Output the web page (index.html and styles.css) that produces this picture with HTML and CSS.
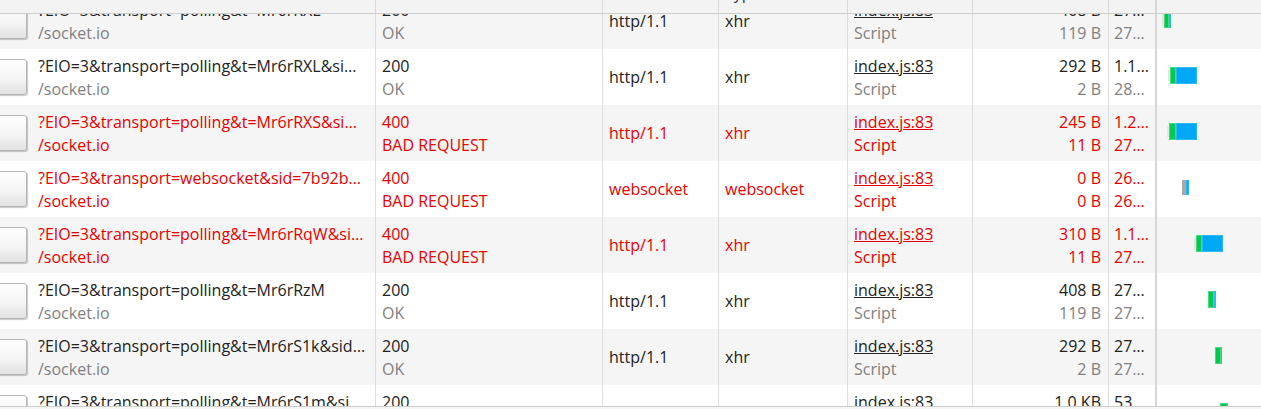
FILE: index.html
```html
<!DOCTYPE html>
<html>
<head>
<meta charset="utf-8">
<link rel="stylesheet" href="styles.css">
</head>
<body>
<div class="panel">
  <div class="grid header">
    <div class="hc"><span>Name</span></div>
    <div class="hc"><span>Status</span></div>
    <div class="hc"><span>Protocol</span></div>
    <div class="hc"><span>Type</span></div>
    <div class="hc"><span>Initiator</span></div>
    <div class="hc right"><span>Size</span></div>
    <div class="hc time"><span>Time</span></div>
    <div class="hc wfh"><span>Waterfall</span></div>
  </div>
  <div class="body">
    <div class="grid row odd first">
      <div class="c name"><div class="icon"></div><div class="two"><div class="l1">?EIO=3&amp;transport=polling&amp;t=Mr6rRXE</div><div class="l2">/socket.io</div></div></div>
      <div class="c"><div class="two"><div class="l1">200</div><div class="l2">OK</div></div></div>
      <div class="c"><div class="one">http/1.1</div></div>
      <div class="c"><div class="one">xhr</div></div>
      <div class="c"><div class="two"><div class="l1 link">index.js:83</div><div class="l2">Script</div></div></div>
      <div class="c right"><div class="two"><div class="l1">408 B</div><div class="l2">119 B</div></div></div>
      <div class="c time"><div class="two"><div class="l1">27…</div><div class="l2">27…</div></div></div>
      <div class="wf"><span class="seg stub" style="left:5px;width:2px"></span><span class="seg green" style="left:7px;width:5px"></span><span class="seg blue" style="left:12px;width:2px"></span></div>
    </div>
    <div class="grid row">
      <div class="c name"><div class="icon"></div><div class="two"><div class="l1">?EIO=3&amp;transport=polling&amp;t=Mr6rRXL&amp;si…</div><div class="l2">/socket.io</div></div></div>
      <div class="c"><div class="two"><div class="l1">200</div><div class="l2">OK</div></div></div>
      <div class="c"><div class="one">http/1.1</div></div>
      <div class="c"><div class="one">xhr</div></div>
      <div class="c"><div class="two"><div class="l1 link">index.js:83</div><div class="l2">Script</div></div></div>
      <div class="c right"><div class="two"><div class="l1">292 B</div><div class="l2">2 B</div></div></div>
      <div class="c time"><div class="two"><div class="l1">1.1…</div><div class="l2">28…</div></div></div>
      <div class="wf"><span class="seg stub" style="left:11px;width:2px"></span><span class="seg green" style="left:13px;width:6px"></span><span class="seg blue" style="left:19px;width:21px"></span></div>
    </div>
    <div class="grid row odd err">
      <div class="c name"><div class="icon"></div><div class="two"><div class="l1">?EIO=3&amp;transport=polling&amp;t=Mr6rRXS&amp;si…</div><div class="l2">/socket.io</div></div></div>
      <div class="c"><div class="two"><div class="l1">400</div><div class="l2">BAD REQUEST</div></div></div>
      <div class="c"><div class="one">http/1.1</div></div>
      <div class="c"><div class="one">xhr</div></div>
      <div class="c"><div class="two"><div class="l1 link">index.js:83</div><div class="l2">Script</div></div></div>
      <div class="c right"><div class="two"><div class="l1">245 B</div><div class="l2">11 B</div></div></div>
      <div class="c time"><div class="two"><div class="l1">1.2…</div><div class="l2">27…</div></div></div>
      <div class="wf"><span class="seg stub" style="left:10px;width:2px"></span><span class="seg green" style="left:12px;width:7px"></span><span class="seg blue" style="left:19px;width:21px"></span></div>
    </div>
    <div class="grid row err">
      <div class="c name"><div class="icon"></div><div class="two"><div class="l1">?EIO=3&amp;transport=websocket&amp;sid=7b92b…</div><div class="l2">/socket.io</div></div></div>
      <div class="c"><div class="two"><div class="l1">400</div><div class="l2">BAD REQUEST</div></div></div>
      <div class="c"><div class="one">websocket</div></div>
      <div class="c"><div class="one">websocket</div></div>
      <div class="c"><div class="two"><div class="l1 link">index.js:83</div><div class="l2">Script</div></div></div>
      <div class="c right"><div class="two"><div class="l1">0 B</div><div class="l2">0 B</div></div></div>
      <div class="c time"><div class="two"><div class="l1">26…</div><div class="l2">26…</div></div></div>
      <div class="wf"><span class="seg grey thin" style="left:25px;width:4px"></span><span class="seg blue thin" style="left:29px;width:3px"></span></div>
    </div>
    <div class="grid row odd err">
      <div class="c name"><div class="icon"></div><div class="two"><div class="l1">?EIO=3&amp;transport=polling&amp;t=Mr6rRqW&amp;si…</div><div class="l2">/socket.io</div></div></div>
      <div class="c"><div class="two"><div class="l1">400</div><div class="l2">BAD REQUEST</div></div></div>
      <div class="c"><div class="one">http/1.1</div></div>
      <div class="c"><div class="one">xhr</div></div>
      <div class="c"><div class="two"><div class="l1 link">index.js:83</div><div class="l2">Script</div></div></div>
      <div class="c right"><div class="two"><div class="l1">310 B</div><div class="l2">11 B</div></div></div>
      <div class="c time"><div class="two"><div class="l1">1.1…</div><div class="l2">27…</div></div></div>
      <div class="wf"><span class="seg stub" style="left:37px;width:2px"></span><span class="seg green" style="left:39px;width:6px"></span><span class="seg blue" style="left:45px;width:21px"></span></div>
    </div>
    <div class="grid row">
      <div class="c name"><div class="icon"></div><div class="two"><div class="l1">?EIO=3&amp;transport=polling&amp;t=Mr6rRzM</div><div class="l2">/socket.io</div></div></div>
      <div class="c"><div class="two"><div class="l1">200</div><div class="l2">OK</div></div></div>
      <div class="c"><div class="one">http/1.1</div></div>
      <div class="c"><div class="one">xhr</div></div>
      <div class="c"><div class="two"><div class="l1 link">index.js:83</div><div class="l2">Script</div></div></div>
      <div class="c right"><div class="two"><div class="l1">408 B</div><div class="l2">119 B</div></div></div>
      <div class="c time"><div class="two"><div class="l1">27…</div><div class="l2">27…</div></div></div>
      <div class="wf"><span class="seg green" style="left:51px;width:6px"></span><span class="seg blue" style="left:57px;width:2px"></span></div>
    </div>
    <div class="grid row odd">
      <div class="c name"><div class="icon"></div><div class="two"><div class="l1">?EIO=3&amp;transport=polling&amp;t=Mr6rS1k&amp;sid…</div><div class="l2">/socket.io</div></div></div>
      <div class="c"><div class="two"><div class="l1">200</div><div class="l2">OK</div></div></div>
      <div class="c"><div class="one">http/1.1</div></div>
      <div class="c"><div class="one">xhr</div></div>
      <div class="c"><div class="two"><div class="l1 link">index.js:83</div><div class="l2">Script</div></div></div>
      <div class="c right"><div class="two"><div class="l1">292 B</div><div class="l2">2 B</div></div></div>
      <div class="c time"><div class="two"><div class="l1">27…</div><div class="l2">27…</div></div></div>
      <div class="wf"><span class="seg green" style="left:58px;width:6px"></span><span class="seg blue" style="left:64px;width:1px"></span></div>
    </div>
    <div class="grid row">
      <div class="c name"><div class="icon"></div><div class="two"><div class="l1">?EIO=3&amp;transport=polling&amp;t=Mr6rS1m&amp;si…</div><div class="l2">/socket.io</div></div></div>
      <div class="c"><div class="two"><div class="l1">200</div><div class="l2">OK</div></div></div>
      <div class="c"><div class="one">http/1.1</div></div>
      <div class="c"><div class="one">xhr</div></div>
      <div class="c"><div class="two"><div class="l1 link">index.js:83</div><div class="l2">Script</div></div></div>
      <div class="c right"><div class="two"><div class="l1">1.0 KB</div><div class="l2">403 B</div></div></div>
      <div class="c time"><div class="two"><div class="l1">53…</div><div class="l2">27…</div></div></div>
      <div class="wf"><span class="seg green" style="left:63px;width:7px"></span><span class="seg blue" style="left:70px;width:1px"></span></div>
    </div>
  </div>
  <div class="footer"></div>
</div>
</body>
</html>
```
FILE: styles.css
```css
html, body {
  margin: 0;
  padding: 0;
  background: #fff;
}
.panel {
  width: 1261px;
  height: 409px;
  overflow: hidden;
  display: flex;
  flex-direction: column;
  font-family: "Open Sans", "Noto Sans", sans-serif;
  font-size: 16px;
  color: #222;
}
.grid {
  display: grid;
  grid-template-columns: 376px 227px 116px 129px 125px 136px 48px 1fr;
}
.header {
  height: 13px;
  flex: 0 0 13px;
  background: #f3f3f3;
  border-bottom: 1px solid #cdcdcd;
  position: relative;
  z-index: 2;
}
.hc {
  box-sizing: border-box;
  border-right: 1px solid #dadada;
  overflow: hidden;
  padding-left: 6px;
  color: #333;
}
.hc span {
  display: block;
  line-height: 20px;
  margin-top: -17px;
  white-space: nowrap;
}
.hc.right {
  text-align: right;
  padding-right: 7px;
}
.hc.time {
  border-right: 2px solid #d6d6d6;
}
.hc.wfh {
  border-right: none;
}
.body {
  flex: 1 1 auto;
  overflow: hidden;
}
.footer {
  flex: 0 0 2px;
  border-top: 1px solid #cccccc;
  background: #f6f6f6;
}
.row {
  height: 56px;
  background: #fff;
}
.row.odd {
  background: #f5f5f5;
}
.row.first {
  margin-top: -21px;
}
.c {
  box-sizing: border-box;
  border-right: 1px solid #dddddd;
  padding-left: 6px;
  padding-right: 4px;
  display: flex;
  align-items: center;
  min-width: 0;
  overflow: hidden;
  white-space: nowrap;
}
.c.right {
  justify-content: flex-end;
  padding-right: 7px;
  text-align: right;
}
.c.time {
  border-right: 2px solid #d6d6d6;
  padding-left: 5px;
  padding-right: 0;
}
.c.name {
  padding-left: 0;
}
.two {
  min-width: 0;
  overflow: hidden;
  line-height: 23px;
  padding-top: 1px;
}
.one {
  line-height: 23px;
  overflow: hidden;
  text-overflow: ellipsis;
}
.l1, .l2 {
  overflow: hidden;
  text-overflow: ellipsis;
  white-space: nowrap;
}
.l2 {
  color: #808080;
}
.link {
  text-decoration: underline;
}
.icon {
  flex: 0 0 auto;
  box-sizing: border-box;
  width: 33px;
  height: 36px;
  margin-left: -6px;
  margin-right: 11px;
  border: 1px solid #b5b5b5;
  border-radius: 0 3px 3px 0;
  background: linear-gradient(180deg, #ffffff 0%, #f4f4f4 55%, #e2e2e2 100%);
  box-shadow: 1px 1px 1px rgba(0, 0, 0, 0.22);
}
.err .c,
.err .l2 {
  color: #e60000;
}
.wf {
  position: relative;
}
.seg {
  position: absolute;
  top: 18px;
  height: 17px;
}
.seg.thin {
  top: 19px;
  height: 15px;
}
.stub {
  background: #e4e4e4;
  top: 21px;
  height: 11px;
}
.grey {
  background: #a9a9a9;
}
.green {
  background: #00c853;
  box-shadow: inset 0 0 0 1px rgba(120, 230, 150, 0.6);
}
.blue {
  background: #00a8f5;
  box-shadow: inset 0 0 0 1px rgba(90, 200, 255, 0.5);
}
```
